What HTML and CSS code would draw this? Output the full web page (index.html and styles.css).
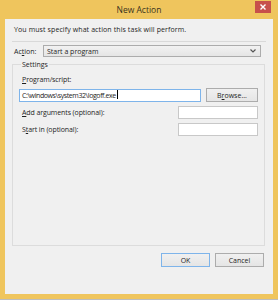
FILE: index.html
```html
<!DOCTYPE html>
<html lang="en">
  <head>
    <meta charset="UTF-8" />
    <meta name="viewport" content="width=device-width, initial-scale=1.0" />
    <title>New Action</title>
    <link rel="stylesheet" href="styles.css">
  </head>
  <body>
    <div class="frame">
      <div class="titlebar">
        <span class="title">New Action</span>
        <button class="close-btn" title="Close">
          <svg width="6" height="6" viewBox="0 0 6 6">
            <path d="M0.5 0.5 L5.5 5.5 M5.5 0.5 L0.5 5.5" stroke="#fff" stroke-width="1.4" />
          </svg>
        </button>
      </div>

      <div class="client">
        <div class="intro">You must specify what action this task will perform.</div>
        <div class="separator"></div>

        <div class="action-row">
          <span class="label">Ac<u>t</u>ion:</span>
          <div class="select">
            <span>Start a program</span>
            <svg class="chevron" width="6" height="4" viewBox="0 0 6 4">
              <path d="M0.5 0.5 L3 3 L5.5 0.5" stroke="#555" stroke-width="1.2" fill="none" />
            </svg>
          </div>
        </div>

        <fieldset class="group">
          <legend>Settings</legend>

          <div class="field-label"><u>P</u>rogram/script:</div>
          <div class="program-row">
            <div class="input focused">C:\windows\system32\logoff.exe<span class="caret"></span></div>
            <button class="btn browse-btn">B<u>r</u>owse...</button>
          </div>

          <div class="opt-row">
            <span class="field-label"><u>A</u>dd arguments (optional):</span>
            <div class="input small"></div>
          </div>
          <div class="opt-row">
            <span class="field-label">S<u>t</u>art in (optional):</span>
            <div class="input small"></div>
          </div>
        </fieldset>

        <div class="buttons">
          <button class="btn default-btn">OK</button>
          <button class="btn">Cancel</button>
        </div>
      </div>
    </div>
  </body>
</html>
```

FILE: styles.css
```css
/* Windows 8 style "New Action" dialog */
body {
  margin: 0;
  padding: 0;
  background-color: #bdbdbd;
  font-family: "Open Sans", "Noto Sans", sans-serif;
  font-size: 7px;
  color: #1e1e1e;
}

.frame {
  width: 268px;
  height: 294px;
  padding: 0 5px 5px 5px;
  background-color: #efc55d;
  display: flex;
  flex-direction: column;
}

.titlebar {
  position: relative;
  height: 19px;
  display: flex;
  align-items: center;
  justify-content: center;
}

.title {
  font-size: 8.5px;
  color: #3a3320;
  margin-top: -1px;
}

.close-btn {
  position: absolute;
  top: 1px;
  right: 2px;
  width: 16px;
  height: 12px;
  padding: 0;
  border: none;
  background-color: #c7504b;
  display: flex;
  align-items: center;
  justify-content: center;
}

.client {
  flex: 1;
  background-color: #f0f0f0;
  padding: 5px 7px 0 7px;
  display: flex;
  flex-direction: column;
}

.intro {
  height: 12px;
  line-height: 12px;
  padding-left: 2px;
  letter-spacing: 0.1px;
}

.separator {
  height: 1px;
  margin-top: 5px;
  background-color: #d9d9d9;
}

.action-row {
  display: flex;
  align-items: center;
  margin-top: 3px;
  padding: 0 5px 0 2px;
  height: 12px;
}

.action-row .label {
  width: 29px;
}

.select {
  flex: 1;
  height: 10px;
  border: 1px solid #acacac;
  background: linear-gradient(#f2f2f2, #e5e5e5);
  display: flex;
  align-items: center;
  justify-content: space-between;
  padding: 0 4px 0 3px;
}

.group {
  margin: 3px 1px 0 0;
  height: 186px;
  border: 1px solid #dcdcdc;
  padding: 5px 6px 0 6px;
  box-sizing: border-box;
  min-width: 0;
}

.group legend {
  padding: 0 1px;
  margin-left: 2px;
}

.field-label {
  padding-left: 3px;
  height: 12px;
  line-height: 12px;
  letter-spacing: -0.1px;
}

.program-row {
  display: flex;
  align-items: center;
  margin-top: 2px;
  gap: 5px;
}

.input {
  height: 11px;
  line-height: 11px;
  border: 1px solid #c8c8c8;
  background-color: #fff;
  padding-left: 2px;
  white-space: nowrap;
}

.input.focused {
  flex: 1;
  border-color: #7eb4ea;
  letter-spacing: -0.4px;
}

.input.small {
  width: 78px;
  padding-left: 0;
}

.caret {
  display: inline-block;
  width: 1px;
  height: 9px;
  margin-left: 1px;
  background-color: #000;
  vertical-align: -1px;
}

.opt-row {
  display: flex;
  align-items: center;
  justify-content: space-between;
  margin-top: 4px;
}

.btn {
  font-family: inherit;
  font-size: 7px;
  color: #1e1e1e;
  height: 14px;
  padding: 0;
  border: 1px solid #acacac;
  background: linear-gradient(#f0f0f0, #e5e5e5);
}

.browse-btn {
  width: 52px;
}

.buttons {
  display: flex;
  justify-content: flex-end;
  gap: 5px;
  margin-top: 7px;
  padding-right: 2px;
}

.buttons .btn {
  width: 49px;
}

.default-btn {
  border-color: #7eb4ea;
}
```
